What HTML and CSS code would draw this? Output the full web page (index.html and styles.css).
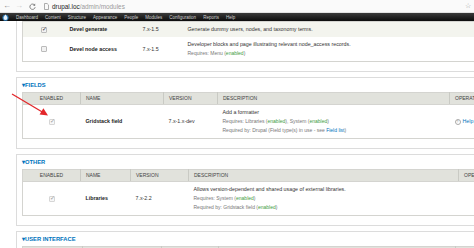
FILE: index.html
```html
<!DOCTYPE html>
<html lang="en">
<head>
  <meta charset="UTF-8">
  <title>Modules | drupal.loc</title>
  <link rel="stylesheet" href="styles.css">
</head>
<body>

  <div class="addressbar">
    <span class="nav back">&#8592;</span>
    <span class="nav fwd">&#8594;</span>
    <svg class="reload" width="7" height="7" viewBox="0 0 10 10"><path d="M8.2 3.2A3.8 3.8 0 1 0 8.8 6" fill="none" stroke="#777" stroke-width="1.3"/><path d="M8.8 0.8v3h-3z" fill="#777"/></svg>
    <svg class="pageicon" width="5" height="7" viewBox="0 0 5 7"><path d="M0.5 0.5h2.6l1.4 1.4v4.6h-4z" fill="none" stroke="#999" stroke-width="0.8"/></svg>
    <span class="url">drupal.loc<span class="path">/admin/modules</span></span>
    <span class="star">&#9734;</span>
  </div>

  <div class="toolbar">
    <svg class="logo" width="7" height="7" viewBox="0 0 10 10"><circle cx="5" cy="5.4" r="4.4" fill="#2a7ab8"/><path d="M5 0.6C4 2.4 2.2 3.4 2.2 5.6a2.8 2.8 0 0 0 5.6 0C7.8 3.4 6 2.4 5 0.6z" fill="#e8f2fb"/></svg>
    <span>Dashboard</span>
    <span>Content</span>
    <span>Structure</span>
    <span>Appearance</span>
    <span>People</span>
    <span>Modules</span>
    <span>Configuration</span>
    <span>Reports</span>
    <span>Help</span>
  </div>

  <div class="page">

    <div class="fieldset cut">
      <table class="modules devel">
        <colgroup><col class="c1"><col class="c2"><col class="c3"><col class="c4"><col></colgroup>
        <tbody>
          <tr class="odd">
            <td class="enabled"><span class="box on"></span></td>
            <td class="name">Devel generate</td>
            <td>7.x-1.5</td>
            <td class="desc">Generate dummy users, nodes, and taxonomy terms.</td>
            <td></td>
          </tr>
          <tr>
            <td class="enabled"><span class="box"></span></td>
            <td class="name">Devel node access</td>
            <td>7.x-1.5</td>
            <td class="desc">Developer blocks and page illustrating relevant node_access records.
              <div class="req">Requires: Menu (<span class="ok">enabled</span>)</div>
            </td>
            <td></td>
          </tr>
        </tbody>
      </table>
    </div>

    <div class="fieldset">
      <div class="legend">&#9662;FIELDS</div>
      <table class="modules fields">
        <colgroup><col class="c1"><col class="c2"><col class="c3"><col class="c4"><col></colgroup>
        <thead>
          <tr><th class="enabled">Enabled</th><th>Name</th><th>Version</th><th>Description</th><th>Operations</th></tr>
        </thead>
        <tbody>
          <tr>
            <td class="enabled"><span class="box off"></span></td>
            <td class="name">Gridstack field</td>
            <td>7.x-1.x-dev</td>
            <td class="desc">Add a formatter
              <div class="req">Requires: Libraries (<span class="ok">enabled</span>), System (<span class="ok">enabled</span>)</div>
              <div class="req">Required by: Drupal (Field type(s) in use - see <a href="#">Field list</a>)</div>
            </td>
            <td class="ops"><span class="help">?</span><a href="#">Help</a></td>
          </tr>
        </tbody>
      </table>
    </div>

    <div class="fieldset">
      <div class="legend">&#9662;OTHER</div>
      <table class="modules other">
        <colgroup><col class="c1"><col class="c2"><col class="c3"><col class="c4"><col></colgroup>
        <thead>
          <tr><th class="enabled">Enabled</th><th>Name</th><th>Version</th><th>Description</th><th>Operations</th></tr>
        </thead>
        <tbody>
          <tr>
            <td class="enabled"><span class="box off"></span></td>
            <td class="name">Libraries</td>
            <td>7.x-2.2</td>
            <td class="desc">Allows version-dependent and shared usage of external libraries.
              <div class="req">Requires: System (<span class="ok">enabled</span>)</div>
              <div class="req">Required by: Gridstack field (<span class="ok">enabled</span>)</div>
            </td>
            <td></td>
          </tr>
        </tbody>
      </table>
    </div>

    <div class="fieldset">
      <div class="legend">&#9662;USER INTERFACE</div>
      <table class="modules ui">
        <colgroup><col class="c1"><col class="c2"><col class="c3"><col class="c4"><col></colgroup>
        <thead>
          <tr><th class="enabled">Enabled</th><th>Name</th><th>Version</th><th>Description</th><th>Operations</th></tr>
        </thead>
      </table>
    </div>

  </div>

  <svg class="arrow" width="60" height="40" viewBox="0 0 60 40">
    <path d="M12 14L44 33" stroke="#e3262a" stroke-width="1.3" fill="none"/>
    <path d="M48 35.5L39.6 34.6L43.4 28.2z" fill="#e3262a"/>
  </svg>

</body>
</html>
```

FILE: styles.css
```css
body {
  margin: 0;
  width: 474px;
  height: 248px;
  overflow: hidden;
  position: relative;
  font-family: "Liberation Sans", Arial, sans-serif;
  background-color: #fff;
  color: #333;
}

/* barra do navegador */
.addressbar {
  height: 12px;
  border-bottom: 1px solid #e2e2e2;
  display: flex;
  align-items: center;
  padding-left: 3px;
  background-color: #fafafa;
}

.nav {
  font-size: 8px;
  line-height: 8px;
  color: #888;
  width: 12px;
}

.nav.fwd {
  color: #ccc;
}

.reload {
  margin-left: 2px;
}

.pageicon {
  margin-left: 8px;
}

.url {
  margin-left: 3px;
  font-size: 6.4px;
  color: #222;
}

.url .path {
  color: #9a9a9a;
}

.star {
  margin-left: auto;
  margin-right: 3px;
  font-size: 7px;
  color: #999;
}

/* toolbar do drupal */
.toolbar {
  height: 8px;
  display: flex;
  align-items: center;
  gap: 7px;
  padding-left: 2px;
  background: linear-gradient(#3a3a3a, #0c0c0c);
  color: #d0d0d0;
  font-size: 4.5px;
}

.toolbar .logo {
  margin-right: 0;
}

.page {
  padding-left: 16px;
  width: 540px;
}

.fieldset {
  border: 1px solid #dcdcdc;
  padding: 3px 5px 9px;
  margin-bottom: 5px;
}

.fieldset.cut {
  border-top: none;
  padding-top: 0;
}

.legend {
  height: 9px;
  line-height: 9px;
  margin-bottom: 2px;
  font-size: 5.8px;
  font-weight: bold;
  color: #0074bd;
}

table.modules {
  width: 520px;
  table-layout: fixed;
  border-collapse: collapse;
  border: 1px solid #d4d4d0;
  font-size: 5.3px;
}

.devel {
  border-top: none;
}

th {
  background-color: #e1e2dc;
  border-right: 1px solid #c9cac4;
  border-bottom: 1px solid #d4d4d0;
  padding: 2px 5px;
  line-height: 7px;
  height: 7px;
  text-align: left;
  font-weight: normal;
  text-transform: uppercase;
  font-size: 5px;
  color: #444;
}

td {
  padding: 3px 5px;
  line-height: 9px;
  vertical-align: middle;
}

tr.odd td {
  background-color: #f3f4ee;
}

th.enabled, td.enabled {
  text-align: center;
}

td.name {
  font-weight: bold;
  color: #222;
}

.req {
  color: #777;
  font-size: 5px;
}

.ok {
  color: #3e9c3e;
}

a {
  color: #0074bd;
  text-decoration: none;
}

.box {
  display: inline-block;
  width: 4px;
  height: 4px;
  border: 1px solid #bbb;
  border-radius: 1px;
  background-color: #f2f2f2;
  position: relative;
  vertical-align: middle;
}

.box.on::after, .box.off::after {
  content: "\2713";
  position: absolute;
  left: 0;
  top: -3px;
  font-size: 6px;
  line-height: 8px;
  color: #333;
}

.box.off::after {
  color: #999;
}

.box.off {
  border-color: #d6d6d6;
  background-color: #f7f7f7;
}

/* colunas por tabela */
.devel .c1 { width: 42px; }
.devel .c2 { width: 73px; }
.devel .c3 { width: 45px; }
.devel .c4 { width: 267px; }

.fields .c1 { width: 58px; }
.fields .c2 { width: 83px; }
.fields .c3 { width: 54px; }
.fields .c4 { width: 232px; }

.other .c1 { width: 58px; }
.other .c2 { width: 50px; }
.other .c3 { width: 58px; }
.other .c4 { width: 270px; }

.ui .c1 { width: 60px; }
.ui .c2 { width: 79px; }
.ui .c3 { width: 57px; }
.ui .c4 { width: 237px; }

.ops {
  white-space: nowrap;
}

.help {
  display: inline-block;
  width: 4px;
  height: 4px;
  line-height: 4px;
  border: 1px solid #aaa;
  border-radius: 50%;
  font-size: 3.5px;
  text-align: center;
  color: #888;
  margin-right: 2px;
  vertical-align: middle;
}

.arrow {
  position: absolute;
  left: 0;
  top: 80px;
}
```
